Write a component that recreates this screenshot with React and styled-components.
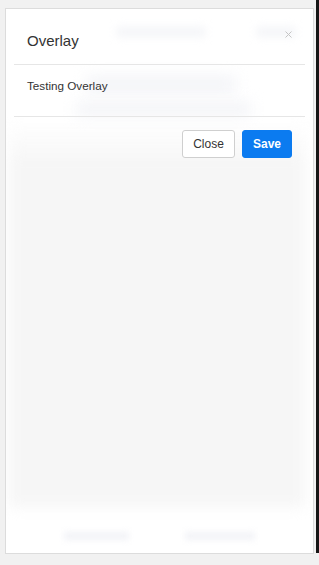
import React from "react";
import styled, { createGlobalStyle } from "styled-components";

const Global = createGlobalStyle`
  html, body { margin: 0; padding: 0; background: #f1f1f1; }
  body { font-family: "Liberation Sans", Arial, sans-serif; }
  * { box-sizing: border-box; }
`;

const Page = styled.div`
  display: flex;
  height: 565px;
  width: 319px;
  padding: 8px 0 0 5px;
  overflow: hidden;
`;

const Frame = styled.div`
  position: relative;
  width: 309px;
  height: 546px;
  border: 1px solid #dcdcdc;
  background: #ffffff;
  display: flex;
  flex-direction: column;
  overflow: hidden;
`;

const Edge = styled.div`
  width: 3px;
  margin-left: 2px;
  height: 553px;
  margin-top: -8px;
  background: #161616;
`;

const Ghost = styled.div`
  position: absolute;
  left: ${(p) => p.$x}px;
  top: ${(p) => p.$y}px;
  width: ${(p) => p.$w}px;
  height: ${(p) => p.$h}px;
  background: #f4f5f8;
  filter: blur(${(p) => p.$b || 4}px);
  border-radius: 4px;
`;

const Modal = styled.div`
  position: relative;
  z-index: 2;
  margin: 0 8px;
`;

const Header = styled.div`
  display: flex;
  align-items: flex-start;
  justify-content: space-between;
  padding: 22px 12px 13px 13px;
  border-bottom: 1px solid #e6e6e6;
`;

const Title = styled.h5`
  margin: 0;
  font-size: 15px;
  line-height: 20px;
  font-weight: 400;
  color: #333;
`;

const CloseX = styled.button`
  border: 0;
  background: none;
  padding: 0;
  margin-top: -2px;
  width: 10px;
  height: 10px;
  display: flex;
  align-items: center;
  justify-content: center;
  cursor: pointer;
`;

const Body = styled.div`
  padding: 14px 13px 23px 13px;
  font-size: 11.7px;
  line-height: 14px;
  color: #333;
  border-bottom: 1px solid #e6e6e6;
`;

const Footer = styled.div`
  display: flex;
  justify-content: flex-end;
  gap: 7px;
  padding: 13px 13px 0 13px;
`;

const Button = styled.button`
  height: 28px;
  width: ${(p) => p.$w}px;
  border-radius: 3px;
  font-family: "Liberation Sans", Arial, sans-serif;
  font-size: 12px;
  padding: 0;
  cursor: pointer;
  ${(p) =>
    p.$primary
      ? `background: #0b7bf0; border: 1px solid #0b7bf0; color: #fff; font-weight: 700;`
      : `background: #fff; border: 1px solid #cfcfcf; color: #333; font-weight: 400;`}
`;

const Shade = styled.div`
  position: relative;
  z-index: 1;
  flex: 1;
  margin: -36px 8px 0 3px;
  background: linear-gradient(to bottom, rgba(246, 246, 246, 0) 0, #f6f6f6 40px, #f6f6f6 100%);
  filter: blur(7px);
`;

const Bottom = styled.div`
  position: relative;
  height: 46px;
  display: flex;
  justify-content: space-around;
  align-items: center;
  padding: 0 30px;
`;

const GhostText = styled.div`
  width: ${(p) => p.$w}px;
  height: 8px;
  margin-top: 12px;
  background: #f2f3f7;
  filter: blur(3px);
`;

export default function App() {
  return (
    <>
      <Global />
      <Page>
        <Frame>
          <Ghost $x={110} $y={18} $w={90} $h={10} $b={4} />
          <Ghost $x={250} $y={18} $w={40} $h={10} $b={4} />
          <Ghost $x={80} $y={66} $w={150} $h={18} $b={7} />
          <Ghost $x={70} $y={92} $w={175} $h={16} $b={7} />
          <Modal>
            <Header>
              <Title>Overlay</Title>
              <CloseX aria-label="Close">
                <svg width="7" height="7" viewBox="0 0 7 7">
                  <path d="M0.5 0.5 L6.5 6.5 M6.5 0.5 L0.5 6.5" stroke="#c4c4c4" strokeWidth="1" />
                </svg>
              </CloseX>
            </Header>
            <Body>Testing Overlay</Body>
            <Footer>
              <Button $w={53}>Close</Button>
              <Button $w={50} $primary>Save</Button>
            </Footer>
          </Modal>
          <Shade />
          <Bottom>
            <GhostText $w={65} />
            <GhostText $w={70} />
          </Bottom>
        </Frame>
        <Edge />
      </Page>
    </>
  );
}
